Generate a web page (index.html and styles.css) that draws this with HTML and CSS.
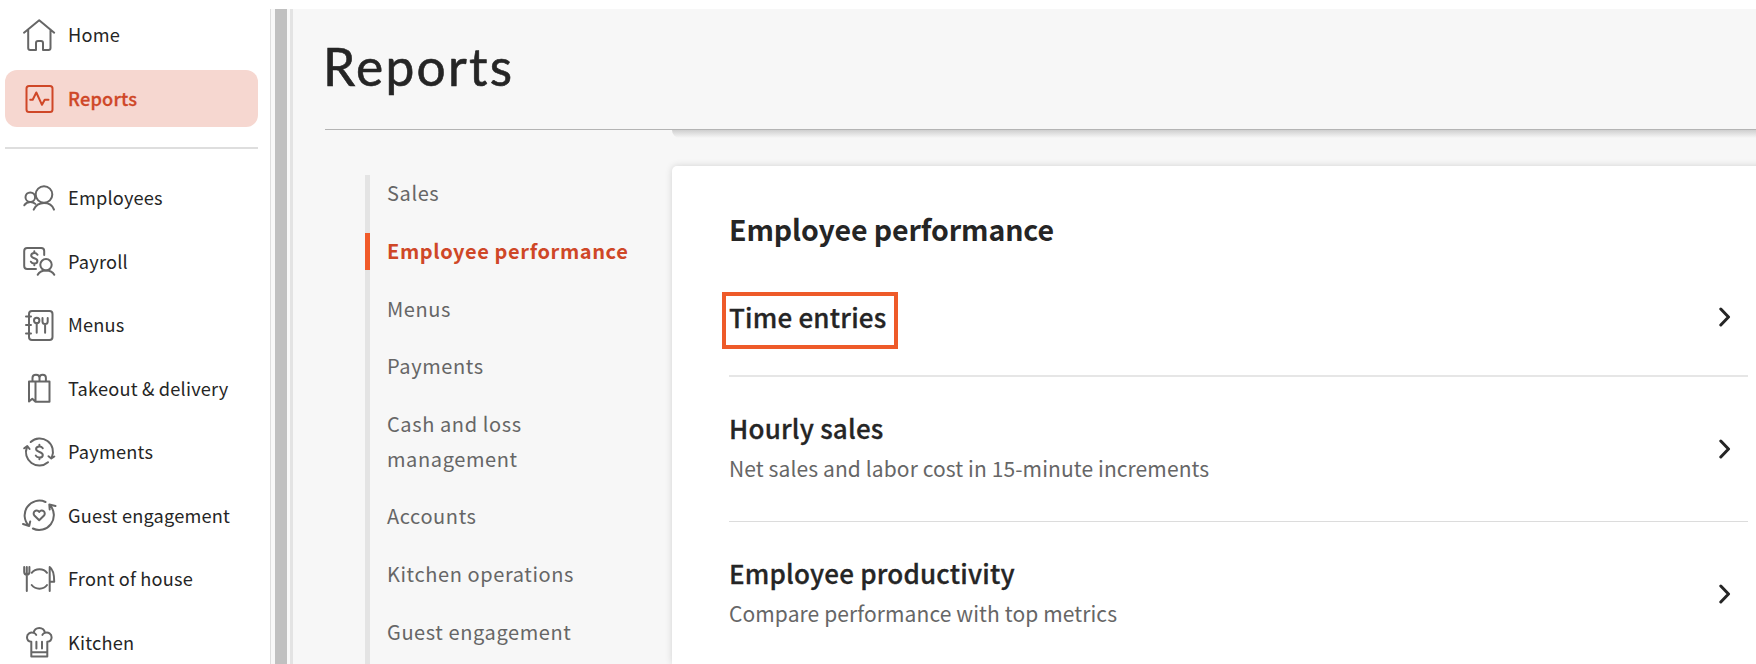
FILE: index.html
```
<!DOCTYPE html>
<html lang="en">
<head>
    <meta charset="UTF-8">
    <meta name="viewport" content="width=device-width, initial-scale=1.0">
    <title>Reports</title>
    <link rel="stylesheet" href="styles.css">
</head>
<body>
<div class="app">
    <nav class="sidebar">
        <a class="nav-item">
            <svg class="icon" viewBox="0 0 32 32"><path d="M1 13.700 16.200 1.200 31.200 13.700M5.200 10.600V29q0 2 2 2H13V24q0-2 2-2h3q2 0 2 2v7h5.500q2 0 2-2V10.600"/></svg>
            <span>Home</span>
        </a>
        <a class="nav-item active">
            <svg class="icon" viewBox="0 0 32 32"><rect x="3.500" y="3" width="26" height="26" rx="2.500"/><path d="M7.200 16.800h2.500L13.300 9.500 19 21.800l2.700-5h3.800"/></svg>
            <span>Reports</span>
        </a>
        <hr class="nav-divider">
        <a class="nav-item">
            <svg class="icon" viewBox="0 0 32 32"><circle cx="21" cy="11.500" r="8.300"/><circle cx="7.300" cy="14.200" r="4.800"/><path d="M10.700 26.600C12.500 22.500 16 20 21 20s8.500 2.500 10 6.600M1.300 22.300C2.600 20.200 4.500 19 7.300 19c2 0 3.700.6 5 1.900"/></svg>
            <span>Employees</span>
        </a>
        <a class="nav-item">
            <svg class="icon" viewBox="0 0 32 32"><path d="M21.200 9V5q0-3-3-3H4.200q-3 0-3 3v15q0 3 3 3H13M14.500 8.700C13.800 7.600 12.600 7 11.300 7 9.500 7 8.200 8 8.200 9.500c0 3.400 6.200 2 6.200 5.500 0 1.500-1.300 2.500-3.100 2.500-1.500 0-2.700-.6-3.400-1.800M11.300 5.300V7M11.300 17.500v1.700"/><circle cx="23" cy="18.700" r="5.700"/><path d="M14.700 28.800c1.500-3 4.600-4.400 8.300-4.400s6.800 1.400 8.300 4.400"/></svg>
            <span>Payroll</span>
        </a>
        <a class="nav-item">
            <svg class="icon" viewBox="0 0 32 32"><rect x="6" y="1" width="23.500" height="29" rx="3"/><path d="M3 6.500h5M3 15h5M3 23.500h5M13.700 13.300v9.500M19.500 8v3.500q0 2.500 2.600 2.500t2.600-2.500V8M22.100 14v8.800"/><circle cx="13.700" cy="10.500" r="2.700"/></svg>
            <span>Menus</span>
        </a>
        <a class="nav-item">
            <svg class="icon" viewBox="0 0 32 32"><path d="M12.500 8.500h14v20.200h-14zM12.500 8.500H6v20l3.300-2.800 3.200 3M9.500 8V4.800q0-3 3.500-3t3.500 3V8M16.500 4.800q0-3 3.200-3t3.200 3V8"/></svg>
            <span>Takeout &amp; delivery</span>
        </a>
        <a class="nav-item">
            <svg class="icon" viewBox="0 0 32 32"><path d="M7.700 5A13.300 13.300 0 0 1 28.800 20.300M25.500 19.200l2.800 2.300 3-2M25 25.200A13.300 13.300 0 0 1 4 10M1.200 11.300 4.300 9l2.300 3"/><path d="M19.800 11.200c-.8-1.200-2-1.700-3.400-1.700-2 0-3.300 1-3.300 2.600 0 3.600 6.700 2.100 6.700 5.800 0 1.600-1.400 2.600-3.400 2.600-1.600 0-2.900-.6-3.600-1.900M16.400 7.800v1.700M16.400 20.500v1.700"/></svg>
            <span>Payments</span>
        </a>
        <a class="nav-item">
            <svg class="icon" viewBox="0 0 32 32"><path d="M22.500 2A14.700 14.700 0 0 0 5.800 25.600M0 24l6.200 2 1-4.600M9.900 28.500A14.700 14.700 0 0 0 27.200 5.500M32.500 6 26.300 4.500l.4 5"/><path d="M16.200 20.300l-4.600-4.500c-3-3.300 1.700-7.500 4.600-3.800 2.900-3.700 7.600.5 4.600 3.800z"/></svg>
            <span>Guest engagement</span>
        </a>
        <a class="nav-item">
            <svg class="icon" viewBox="0 0 32 32"><path d="M1.200 3v5q0 2.700 2.600 2.700T6.400 8V3M3.800 3v24M8.700 8.800C12.500 4 20.500 4 24 8.800M8.700 21c3.800 4.900 11.800 4.900 15.300 0M26.700 27V3c3 2 4.500 8 4.500 14.800h-4.500"/></svg>
            <span>Front of house</span>
        </a>
        <a class="nav-item">
            <svg class="icon" viewBox="0 0 32 32"><path d="M8.300 29.500V14.800C5.500 14.500 4 12.500 4 10.200c0-3.500 3.300-5.500 6.800-4.300C11 3 13.300 1 16.300 1s5.300 2 5.500 4.900c3.500-1.200 6.800.8 6.800 4.300 0 2.300-1.500 4.300-4.300 4.600v14.700zM8.300 25.300h16M13.400 14.800v6.700M19 14.800v6.700M10.800 5.900c1.200.4 1.900 1 2.400 2M21.800 5.900c-1.200.4-1.900 1-2.400 2"/></svg>
            <span>Kitchen</span>
        </a>
    </nav>
    <div class="scrollbar"></div>
    <main class="content">
        <header class="page-header">
            <h1>Reports</h1>
        </header>
        <div class="columns">
            <ul class="submenu">
                <li>Sales</li>
                <li class="active">Employee performance</li>
                <li>Menus</li>
                <li>Payments</li>
                <li>Cash and loss management</li>
                <li>Accounts</li>
                <li>Kitchen operations</li>
                <li>Guest engagement</li>
            </ul>
            <div class="panel">
                <div class="header-shadow"></div>
                <section class="card">
                    <h2>Employee performance</h2>
                    <a class="report first">
                        <h3 class="highlight">Time entries</h3>
                        <svg class="chevron" viewBox="0 0 12 20"><path d="M1.800 2 9.500 10 1.800 18"/></svg>
                    </a>
                    <a class="report">
                        <div class="report-text">
                            <h3>Hourly sales</h3>
                            <p>Net sales and labor cost in 15-minute increments</p>
                        </div>
                        <svg class="chevron" viewBox="0 0 12 20"><path d="M1.800 2 9.500 10 1.800 18"/></svg>
                    </a>
                    <a class="report">
                        <div class="report-text">
                            <h3>Employee productivity</h3>
                            <p>Compare performance with top metrics</p>
                        </div>
                        <svg class="chevron" viewBox="0 0 12 20"><path d="M1.800 2 9.500 10 1.800 18"/></svg>
                    </a>
                </section>
            </div>
        </div>
    </main>
</div>
</body>
</html>
```
FILE: styles.css
```
* {
    box-sizing: border-box;
}

body {
    margin: 0;
    height: 664px;
    overflow: hidden;
    background-color: #fff;
    color: #252525;
    font-family: "Noto Sans CJK SC", "Noto Sans", sans-serif;
}

h1, h2, h3, p, ul {
    margin: 0;
    padding: 0;
}

.app {
    display: flex;
    height: 664px;
    padding-top: 9px;
    overflow: hidden;
}

/* left navigation */
.sidebar {
    width: 271px;
    padding: 0 12px 0 5px;
    border-right: 1px solid #dedede;
    flex-shrink: 0;
}

.nav-item {
    display: flex;
    align-items: center;
    gap: 13px;
    height: 57px;
    margin-bottom: 6.5px;
    padding-left: 18px;
    border-radius: 12px;
    font-size: 18.2px;
    letter-spacing: 0.2px;
    white-space: nowrap;
}

.nav-item span {
    padding-bottom: 3px;
}

.nav-item:first-child {
    margin-top: -2.5px;
}

.nav-item.active {
    margin-bottom: 0;
    background-color: #f6d7d0;
    color: #cf4727;
    font-weight: 500;
    -webkit-text-stroke: 0.3px #cf4727;
}

.nav-item.active span {
    padding-bottom: 1px;
}

.icon {
    width: 32px;
    height: 32px;
    flex-shrink: 0;
    overflow: visible;
    fill: none;
    stroke: #666;
    stroke-width: 2;
    stroke-linecap: round;
    stroke-linejoin: round;
}

.active .icon {
    stroke: #cf4727;
}

.nav-divider {
    height: 2px;
    margin: 20px 0 21px;
    border: none;
    background-color: #dedede;
}

.scrollbar {
    width: 22px;
    flex-shrink: 0;
    border-left: 4px solid #f8f8f8;
    border-right: 3px solid #e3e3e3;
    background: linear-gradient(to right, #c0c0c0 12px, #f8f8f8 12px);
}

/* page */
.content {
    flex: 1;
    min-width: 0;
    padding-left: 32px;
    background-color: #f7f7f7;
}

.page-header {
    height: 121px;
    padding-top: 23px;
    border-bottom: 1px solid #b4b4b4;
}

.page-header h1 {
    margin-left: -2px;
    font-family: Lato, sans-serif;
    font-size: 51.5px;
    font-weight: 400;
    line-height: 68px;
    letter-spacing: 2.3px;
    -webkit-text-stroke: 0.6px #252525;
}

.columns {
    display: flex;
}

.submenu {
    width: 270px;
    height: 489px;
    margin: 45px 37px 0 40px;
    border-left: 5px solid #e4e4e4;
    flex-shrink: 0;
    list-style: none;
    color: #666;
    font-size: 20px;
    line-height: 34.7px;
    letter-spacing: 0.6px;
}

.submenu li {
    margin: 0 50px 20px -5px;
    padding: 1.3px 0 1.7px 17px;
    border-left: 5px solid transparent;
}

.submenu li.active {
    margin-right: 0;
    border-left-color: #f15b29;
    color: #cf4727;
    font-weight: 700;
    white-space: nowrap;
}

.panel {
    flex: 1;
    min-width: 0;
}

.header-shadow {
    height: 8px;
    margin-bottom: 28px;
    background: linear-gradient(to bottom, #cfcfcf, #f7f7f7);
    border-radius: 0 0 0 8px;
}

.card {
    height: 498px;
    margin-right: -20px;
    padding: 35px 28px 0 57px;
    border-radius: 5px 0 0 0;
    background-color: #fff;
    box-shadow: 0 0 7px rgba(0, 0, 0, 0.15);
}

.card h2 {
    height: 57px;
    font-size: 28.5px;
    font-weight: 700;
    line-height: 55px;
    letter-spacing: -0.1px;
}

.report {
    display: flex;
    align-items: center;
    justify-content: space-between;
    height: 145px;
    padding-right: 17px;
    border-bottom: 1px solid #dcdcdc;
}

.report.first {
    height: 119px;
    border-bottom: 2px solid #e6e6e6;
}

.report-text {
    padding-bottom: 3px;
}

.report h3 {
    margin-bottom: 2.5px;
    font-size: 26px;
    font-weight: 500;
    line-height: 38px;
    letter-spacing: 0.2px;
    -webkit-text-stroke: 0.3px #252525;
}

.report p {
    color: #666;
    font-size: 21px;
    line-height: 36px;
    letter-spacing: 0.1px;
}

.report .highlight {
    width: 176px;
    height: 57px;
    margin: 8px 0 0 -7px;
    padding-left: 3px;
    border: 4px solid #ee5a29;
    line-height: 42px;
    white-space: nowrap;
}

.chevron {
    width: 12px;
    height: 20px;
    fill: none;
    stroke: #252525;
    stroke-width: 3;
    stroke-linecap: round;
    stroke-linejoin: round;
}
```
